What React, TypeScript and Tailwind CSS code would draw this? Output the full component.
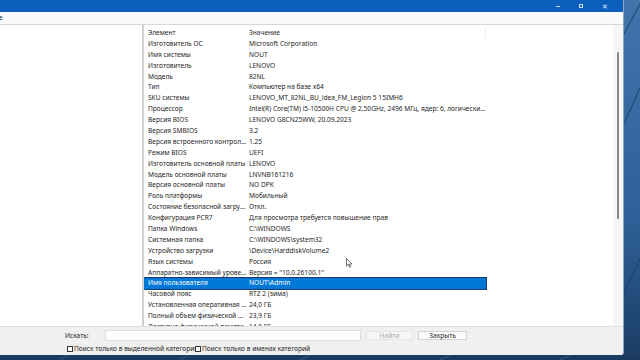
import React from "react";

type Row = { name: string; value: string; selected?: boolean };

const rows: Row[] = [
  { name: "Изготовитель ОС", value: "Microsoft Corporation" },
  { name: "Имя системы", value: "NOUT" },
  { name: "Изготовитель", value: "LENOVO" },
  { name: "Модель", value: "82NL" },
  { name: "Тип", value: "Компьютер на базе x64" },
  { name: "SKU системы", value: "LENOVO_MT_82NL_BU_idea_FM_Legion 5 15IMH6" },
  { name: "Процессор", value: "Intel(R) Core(TM) i5-10500H CPU @ 2.50GHz, 2496 МГц, ядер: 6, логических процессоров: 12" },
  { name: "Версия BIOS", value: "LENOVO G8CN25WW, 20.09.2023" },
  { name: "Версия SMBIOS", value: "3.2" },
  { name: "Версия встроенного контроллера", value: "1.25" },
  { name: "Режим BIOS", value: "UEFI" },
  { name: "Изготовитель основной платы", value: "LENOVO" },
  { name: "Модель основной платы", value: "LNVNB161216" },
  { name: "Версия основной платы", value: "NO DPK" },
  { name: "Роль платформы", value: "Мобильный" },
  { name: "Состояние безопасной загрузки", value: "Откл." },
  { name: "Конфигурация PCR7", value: "Для просмотра требуется повышение прав" },
  { name: "Папка Windows", value: "C:\\WINDOWS" },
  { name: "Системная папка", value: "C:\\WINDOWS\\system32" },
  { name: "Устройство загрузки", value: "\\Device\\HarddiskVolume2" },
  { name: "Язык системы", value: "Россия" },
  { name: "Аппаратно-зависимый уровень (HAL)", value: "Версия = \"10.0.26100.1\"" },
  { name: "Имя пользователя", value: "NOUT\\Admin", selected: true },
  { name: "Часовой пояс", value: "RTZ 2 (зима)" },
  { name: "Установленная оперативная память (RAM)", value: "24,0 ГБ" },
  { name: "Полный объем физической памяти", value: "23,9 ГБ" },
  { name: "Доступно физической памяти", value: "14,8 ГБ" },
];

const font = { fontFamily: '"Noto Sans", "Open Sans", sans-serif' };

const ListRow = ({ row }: { row: Row }) => (
  <div
    className={
      row.selected
        ? "flex h-[10.9px] w-[342px] items-center bg-[#0078d7] text-white outline outline-1 outline-[#1c3c6c]"
        : "flex h-[10.9px] w-[342px] items-center text-[#1e1e1e]"
    }
  >
    <span className="w-[105px] shrink-0 truncate pl-[4px] pr-[2px]">{row.name}</span>
    <span className="w-[237px] shrink-0 truncate">{row.value}</span>
  </div>
);

const Desktop = () => (
  <svg className="absolute inset-0" width="640" height="360" viewBox="0 0 640 360">
    <defs>
      <linearGradient id="dk" x1="0" y1="0" x2="0" y2="1">
        <stop offset="0" stopColor="#4274ab" />
        <stop offset="0.6" stopColor="#2f6198" />
        <stop offset="1" stopColor="#1a3c64" />
      </linearGradient>
    </defs>
    <rect width="640" height="360" fill="url(#dk)" />
    <path d="M640 88 L624 124" stroke="#1d3f68" strokeWidth="1" />
    <path d="M641 2 L624 34" stroke="#1d3f68" strokeWidth="1" />
    <path d="M640 258 L622 298" stroke="#1d3f68" strokeWidth="1" />
    <rect x="0" y="354" width="640" height="6" fill="#1b3a60" />
    <path d="M60 360 L70 354 M180 360 L190 354 M300 360 L312 354 M440 360 L452 354 M560 360 L572 354" stroke="#2f5a8a" strokeWidth="1" />
  </svg>
);

export default function App() {
  return (
    <div className="relative h-[360px] w-[640px] overflow-hidden text-[6.6px]" style={font}>
      <Desktop />
      <div className="relative flex h-[355px] w-[624px] flex-col overflow-hidden rounded-br-[3px] border-r border-[#8fa4bf] bg-[#f3f3f3]">
        {/* title bar */}
        <div className="flex h-[12px] shrink-0 items-center justify-end bg-[#0c5fbd] pr-[6px] text-white">
          <span className="flex w-[22px] justify-center">
            <span className="block h-px w-[4px] bg-white/80" />
          </span>
          <span className="flex w-[24px] justify-center">
            <span className="block h-[4px] w-[4px] border border-white/80" />
          </span>
          <span className="flex w-[24px] justify-center text-[7px] leading-none text-white/90">✕</span>
        </div>
        {/* menu */}
        <div className="flex h-[13px] shrink-0 items-center border-b border-[#d6d6d6] bg-[#fafafa] text-[#222]">
          <span className="-ml-[1px]">е</span>
        </div>
        {/* body */}
        <div className="flex min-h-0 flex-1">
          <div className="w-[144px] shrink-0 border-r-[2px] border-[#cfcfcf] bg-white" />
          <div className="flex min-w-0 flex-1 bg-white">
            <div className="min-w-0 flex-1 overflow-hidden pt-[2.5px]">
              <div className="flex h-[10.9px] w-[342px] items-center text-[#1e1e1e]">
                <span className="w-[105px] shrink-0 pl-[4px]">Элемент</span>
                <span className="w-[237px] shrink-0 border-r border-[#ececec]">Значение</span>
              </div>
              {rows.map((r) => (
                <ListRow key={r.name} row={r} />
              ))}
            </div>
            <div className="relative w-[10px] shrink-0 bg-[#f6f6f6]">
              <div className="absolute left-[4px] top-[27px] h-[167px] w-[2px] rounded-full bg-[#8a8a8a]" />
            </div>
          </div>
        </div>
        {/* find bar */}
        <div className="flex h-[29px] shrink-0 flex-col border-t border-[#e2e2e2] bg-[#f0f0f0] text-[#1e1e1e]">
          <div className="mt-[3px] flex h-[11px] items-center">
            <span className="ml-[65px] w-[40px]">Искать:</span>
            <div className="h-[11px] w-[256px] border border-[#dedede] bg-white" />
            <div className="ml-[5px] flex h-[9px] w-[47px] items-center justify-center border border-[#e6e6e6] bg-[#f6f6f6] text-[#a8a8a8]">
              Найти
            </div>
            <div className="ml-[5px] flex h-[9px] w-[49px] items-center justify-center border border-[#d2d2d2] bg-[#fcfcfc]">
              Закрыть
            </div>
          </div>
          <div className="mt-[3px] flex h-[10px] items-center">
            <span className="ml-[67px] flex w-[128px] items-center overflow-hidden whitespace-nowrap">
              <span className="mr-[1px] inline-block h-[6px] w-[6px] shrink-0 border border-[#333] bg-white" />
              Поиск только в выделенной категории
            </span>
            <span className="flex items-center whitespace-nowrap">
              <span className="mr-[1px] inline-block h-[6px] w-[6px] shrink-0 border border-[#333] bg-white" />
              Поиск только в именах категорий
            </span>
          </div>
        </div>
      </div>
      {/* mouse pointer */}
      <svg className="absolute left-[346px] top-[258px]" width="7" height="10" viewBox="0 0 7 10">
        <path d="M0.5 0.5 L0.5 8 L2.3 6.3 L3.6 9.2 L4.6 8.8 L3.4 6 L6 6 Z" fill="white" stroke="#333" strokeWidth="0.7" />
      </svg>
    </div>
  );
}
